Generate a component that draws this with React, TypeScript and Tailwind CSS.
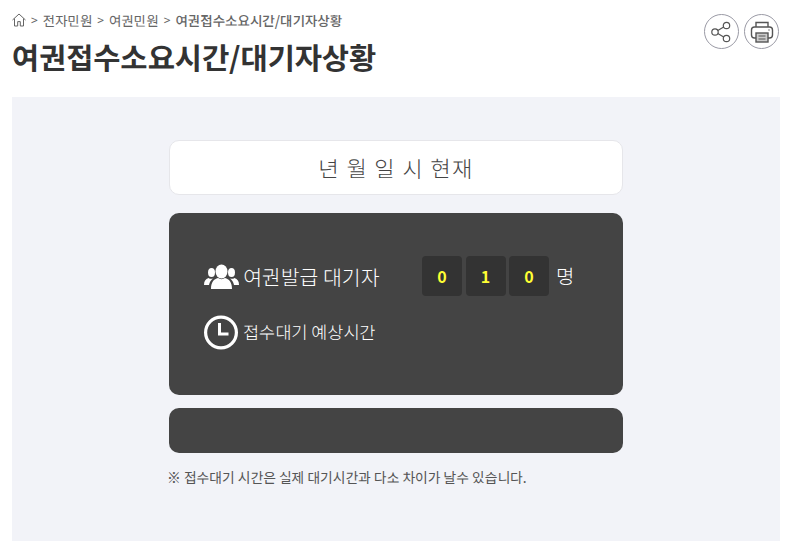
// App.tsx
const font = "font-['Noto_Sans_KR','Noto_Sans_CJK_KR','Noto_Sans',sans-serif]";

function HomeIcon() {
  return (
    <svg width="14" height="14" viewBox="0 0 14 14" fill="none" stroke="#666" strokeWidth="1">
      <path d="M.5 7 7 1 13.500 7" />
      <path d="M2.500 5.500v7.500h3.200V8.600h2.600V13h3.200V5.500" />
    </svg>
  );
}

function ShareIcon() {
  return (
    <svg width="24" height="24" viewBox="0 0 24 24" fill="none" stroke="#555" strokeWidth="1.200">
      <circle cx="5" cy="12" r="3.200" />
      <circle cx="16.500" cy="5.500" r="3.200" />
      <circle cx="16.500" cy="18.500" r="3.200" />
      <path d="M7.800 10.400 13.700 7M7.800 13.600l5.900 3.400" />
    </svg>
  );
}

function PrintIcon() {
  return (
    <svg width="26" height="26" viewBox="0 0 26 26" fill="none" stroke="#555" strokeWidth="1.400">
      <path d="M7 8V3.500h12V8" />
      <rect x="2.500" y="8" width="21" height="11" rx="3" />
      <rect x="7" y="14" width="12" height="9" fill="#ccc" />
      <path d="M9.500 17h7M9.500 20h7" strokeWidth="1" />
      <circle cx="20" cy="11" r="0.700" fill="#555" stroke="none" />
    </svg>
  );
}

function PeopleIcon() {
  return (
    <svg width="35" height="25" viewBox="0 0 35 25" fill="#fff">
      <ellipse cx="17.500" cy="7.500" rx="6" ry="7" />
      <path d="M7 25c0-7 3-10 7-11 2 1.500 5 1.500 7 0 4 1 7 4 7 11z" />
      <ellipse cx="7.500" cy="8.500" rx="3.500" ry="4.500" />
      <path d="M0 21c0-4 1.500-6 4.500-7 1.500 1 3 1 4.500.5-2 1.500-3.500 3.500-4 6.500z" />
      <ellipse cx="27.500" cy="8.500" rx="3.500" ry="4.500" />
      <path d="M35 21c0-4-1.500-6-4.500-7-1.500 1-3 1-4.500.5 2 1.500 3.500 3.500 4 6.500z" />
    </svg>
  );
}

function ClockIcon() {
  return (
    <svg width="34" height="35" viewBox="0 0 34 35" fill="none" stroke="#fff">
      <circle cx="17" cy="17.500" r="15.400" strokeWidth="3.200" />
      <path d="M15.500 8v11h9" strokeWidth="3" />
    </svg>
  );
}

function Digit({ n }: { n: string }) {
  return (
    <span className="flex h-[40px] w-[40px] items-center justify-center rounded-[4px] bg-[#333333] text-[16px] font-bold text-[#ffff33]">
      {n}
    </span>
  );
}

export default function App() {
  return (
    <div className={`${font} h-[556px] w-[800px] overflow-hidden bg-white pr-[20px] pl-[12px] text-[#333]`}>
      <div className="flex h-[97px] justify-between">
        <div>
          <div className="flex items-center gap-[5px] pt-[11px] text-[13.500px] leading-[18px] text-[#666]">
            <HomeIcon />
            <span className="text-[12px]">&gt;</span>
            <span>전자민원</span>
            <span className="text-[12px]">&gt;</span>
            <span>여권민원</span>
            <span className="text-[12px]">&gt;</span>
            <span className="font-medium">여권접수소요시간/대기자상황</span>
          </div>
          <h1 className="mt-[7px] text-[29.500px] leading-[40px] font-bold text-[#333]">
            여권접수소요시간/대기자상황
          </h1>
        </div>
        <div className="flex gap-[5px] pt-[14px] pr-[1px]">
          <button className="flex h-[35px] w-[35px] items-center justify-center rounded-full border border-[#9a9aa5]">
            <ShareIcon />
          </button>
          <button className="flex h-[35px] w-[35px] items-center justify-center rounded-full border border-[#9a9aa5]">
            <PrintIcon />
          </button>
        </div>
      </div>

      <div className="flex h-[444px] flex-col items-center bg-[#f2f3f8] pt-[43px]">
        <div className="w-[454px]">
          <div className="flex h-[55px] items-center justify-center rounded-[10px] border border-[#e6e6ea] bg-white text-[22px] font-light tracking-[1.400px] text-[#444]">
            년 월 일 시 현재
          </div>
          <div className="mt-[18px] h-[182px] rounded-[10px] bg-[#444444] px-[35px] pt-[43px] text-white">
            <div className="flex h-[40px] items-center">
              <PeopleIcon />
              <span className="ml-[4px] w-[179px] text-[20.500px] font-light">여권발급 대기자</span>
              <div className="flex gap-[3.500px]">
                <Digit n="0" />
                <Digit n="1" />
                <Digit n="0" />
              </div>
              <span className="ml-[7px] text-[20px] font-light">명</span>
            </div>
            <div className="mt-[18px] flex h-[37px] items-center">
              <ClockIcon />
              <span className="ml-[5px] text-[17.500px] font-light">접수대기 예상시간</span>
            </div>
          </div>
          <div className="mt-[13px] h-[45px] rounded-[10px] bg-[#444444]" />
          <p className="mt-[14px] -ml-[2px] text-[13.800px] leading-[20px] text-[#555]">
            ※ 접수대기 시간은 실제 대기시간과 다소 차이가 날수 있습니다.
          </p>
        </div>
      </div>
    </div>
  );
}
